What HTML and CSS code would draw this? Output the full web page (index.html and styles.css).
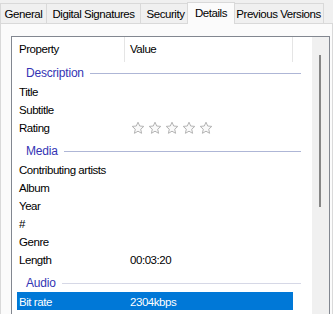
FILE: index.html
```html
<!DOCTYPE html>
<html lang="en">
<head>
  <meta charset="UTF-8">
  <title>Properties - Details</title>
  <link rel="stylesheet" href="styles.css">
</head>
<body>
  <div class="window">
    <div class="tabs">
      <div class="tab tab-general">General</div>
      <div class="tab tab-sign">Digital Signatures</div>
      <div class="tab tab-security">Security</div>
      <div class="tab tab-details active">Details</div>
      <div class="tab tab-prev">Previous Versions</div>
    </div>

    <div class="page">
      <div class="listbox">
        <div class="list">
          <div class="head">
            <div class="head-prop">Property</div>
            <div class="head-val">Value</div>
            <div class="head-rest"></div>
          </div>

          <div class="group first"><span>Description</span><i class="rule"></i></div>
          <div class="row"><span class="name">Title</span></div>
          <div class="row"><span class="name">Subtitle</span></div>
          <div class="row">
            <span class="name">Rating</span>
            <span class="stars">
              <svg viewBox="0 0 14 14"><path d="M7 1.2l1.7 3.8 4.1.4-3.1 2.8.9 4.1L7 10.2l-3.6 2.1.9-4.1L1.2 5.4l4.1-.4z"/></svg>
              <svg viewBox="0 0 14 14"><path d="M7 1.2l1.7 3.8 4.1.4-3.1 2.8.9 4.1L7 10.2l-3.6 2.1.9-4.1L1.2 5.4l4.1-.4z"/></svg>
              <svg viewBox="0 0 14 14"><path d="M7 1.2l1.7 3.8 4.1.4-3.1 2.8.9 4.1L7 10.2l-3.6 2.1.9-4.1L1.2 5.4l4.1-.4z"/></svg>
              <svg viewBox="0 0 14 14"><path d="M7 1.2l1.7 3.8 4.1.4-3.1 2.8.9 4.1L7 10.2l-3.6 2.1.9-4.1L1.2 5.4l4.1-.4z"/></svg>
              <svg viewBox="0 0 14 14"><path d="M7 1.2l1.7 3.8 4.1.4-3.1 2.8.9 4.1L7 10.2l-3.6 2.1.9-4.1L1.2 5.4l4.1-.4z"/></svg>
            </span>
          </div>

          <div class="group"><span>Media</span><i class="rule"></i></div>
          <div class="row"><span class="name">Contributing artists</span></div>
          <div class="row"><span class="name">Album</span></div>
          <div class="row"><span class="name">Year</span></div>
          <div class="row"><span class="name">#</span></div>
          <div class="row"><span class="name">Genre</span></div>
          <div class="row"><span class="name">Length</span><span class="value">00:03:20</span></div>

          <div class="group"><span>Audio</span><i class="rule light"></i></div>
          <div class="row selected"><span class="name">Bit rate</span><span class="value">2304kbps</span></div>
        </div>

        <div class="scrollbar"><div class="thumb"></div></div>
      </div>
    </div>
  </div>
</body>
</html>
```

FILE: styles.css
```css
body {
  margin: 0;
  background: #f0f0f0;
  font-family: 'Liberation Sans', Arial, sans-serif;
  font-size: 11.5px;
  letter-spacing: -0.45px;
  color: #000;
  overflow: hidden;
}

.window {
  width: 333px;
  height: 314px;
  overflow: hidden;
}

/* tab strip */
.tabs {
  display: flex;
  align-items: flex-end;
  height: 23px;
  position: relative;
  z-index: 1;
}

.tab {
  height: 18px;
  line-height: 18px;
  padding-top: 1px;
  border: 1px solid #d9d9d9;
  border-bottom: none;
  margin-right: -1px;
  background: #f0f0f0;
  text-align: center;
  white-space: nowrap;
}

.tab-general { width: 45px; }
.tab-sign { width: 93px; }
.tab-security { width: 49px; }
.tab-prev { width: 89px; }

.tab.active {
  width: 46px;
  height: 21px;
  line-height: 20px;
  padding-top: 0;
  margin: 0 -2px -1px -3px;
  background: #fbfbfb;
  position: relative;
  z-index: 2;
}

/* tab page */
.page {
  height: 291px;
  border: 1px solid #d9d9d9;
  border-bottom: none;
  background: #fbfbfb;
  padding: 12px 2px 0 10px;
  box-sizing: border-box;
  width: 333px;
}

.listbox {
  display: flex;
  width: 319px;
  height: 300px;
  border: 1px solid #828790;
  background: #fff;
  box-sizing: border-box;
}

.list {
  flex: 1;
}

.head {
  display: flex;
  height: 25px;
  line-height: 25px;
}

.head-prop {
  width: 105px;
  padding-left: 7px;
  border-right: 1px solid #e5e5e5;
}

.head-val {
  width: 162px;
  padding-left: 5px;
  border-right: 1px solid #e5e5e5;
}

.head-rest {
  flex: 1;
}

.group {
  display: flex;
  align-items: center;
  height: 18px;
  margin: 6px 11px 0 14px;
  color: #3434b4;
  font-size: 12px;
  letter-spacing: -0.2px;
}

.group.first {
  margin-top: 2px;
}

.rule {
  flex: 1;
  height: 1px;
  margin-left: 6px;
  background: #aeb6d6;
}

.rule.light {
  background: #d6d8e6;
}

.row {
  display: flex;
  align-items: center;
  height: 17px;
  padding-top: 1px;
  margin-left: 5px;
  width: 276px;
}

.name {
  width: 111px;
  padding-left: 2px;
  white-space: nowrap;
}

.row.selected {
  background: #0078d7;
  color: #fff;
}

.stars {
  display: flex;
  gap: 3px;
  margin-left: 1px;
}

.stars svg {
  width: 14px;
  height: 14px;
  fill: #fafafa;
  stroke: #b4b4b4;
  stroke-width: 1;
}

/* thin scrollbar */
.scrollbar {
  width: 17px;
  background: #f0f0f0;
}

.thumb {
  width: 2px;
  height: 152px;
  margin: 18px 0 0 7px;
  background: #868686;
}
```
